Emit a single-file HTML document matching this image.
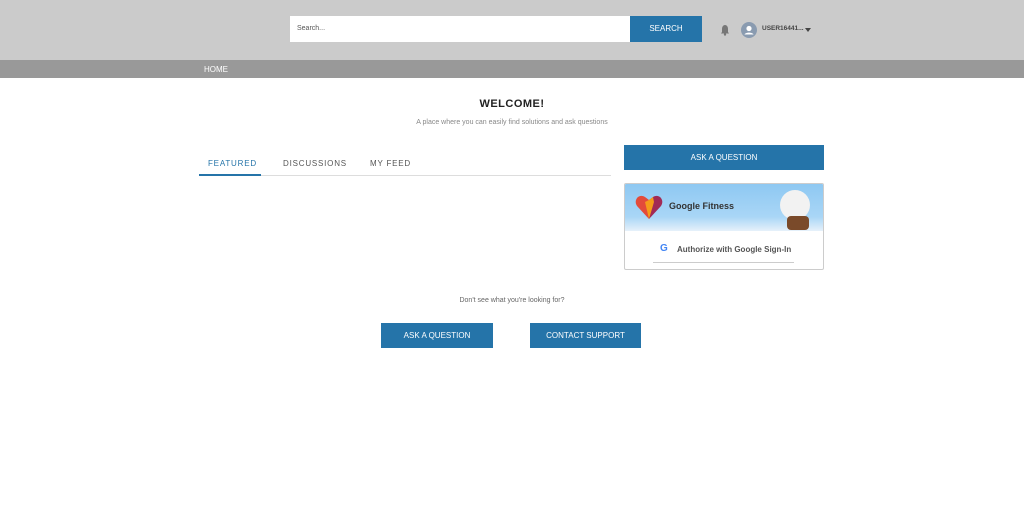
<!DOCTYPE html>
<html><head><style>
body{margin:0;width:1024px;height:520px;background:#fff;font-family:"Liberation Sans",sans-serif;position:relative;overflow:hidden}
.a{position:absolute;line-height:1}
.btn{background:#2574a9;color:#fff;font-size:8px;display:flex;align-items:center;justify-content:center}
</style></head><body>
<div class="a" style="left:0;top:0;width:1024px;height:60px;background:#cbcbcb"></div>
<div class="a" style="left:290px;top:16px;width:340px;height:26px;background:#fff;font-size:7px;color:#555;line-height:26px;text-indent:7px">Search...</div>
<div class="a btn" style="left:630px;top:16px;width:72px;height:26px">SEARCH</div>
<svg class="a" style="left:719px;top:24px" width="12" height="12" viewBox="0 0 12 12"><path d="M6 1C4 1 3 3 3 5v3L2 9.5h8L9 8V5C9 3 8 1 6 1z" fill="#777"/><circle cx="6" cy="10.5" r="1.2" fill="#777"/></svg>
<svg class="a" style="left:741px;top:22px" width="16" height="16" viewBox="0 0 16 16"><circle cx="8" cy="8" r="8" fill="#8a9bb0"/><circle cx="8" cy="6.5" r="2.6" fill="#fff"/><path d="M3.5 12.5c1-2.5 8-2.5 9 0z" fill="#fff"/></svg>
<div class="a" style="left:762px;top:26px;font-size:6.5px;font-weight:bold;color:#444">USER16441...</div>
<div class="a" style="left:805px;top:28px;width:0;height:0;border-left:3px solid transparent;border-right:3px solid transparent;border-top:4px solid #444"></div>
<div class="a" style="left:0;top:60px;width:1024px;height:18px;background:#999"></div>
<div class="a" style="left:204px;top:66px;font-size:8px;color:#fff">HOME</div>
<div class="a" style="left:0;top:99px;width:1024px;text-align:center;font-size:11px;font-weight:bold;color:#222;letter-spacing:.5px">WELCOME!</div>
<div class="a" style="left:0;top:119px;width:1024px;text-align:center;font-size:7px;color:#888">A place where you can easily find solutions and ask questions</div>
<div class="a" style="left:199px;top:175px;width:412px;height:1px;background:#ddd"></div>
<div class="a" style="left:199px;top:174px;width:62px;height:2px;background:#2574a9"></div>
<div class="a" style="left:208px;top:160px;font-size:8px;color:#2574a9;letter-spacing:.8px">FEATURED</div>
<div class="a" style="left:283px;top:160px;font-size:8px;color:#555;letter-spacing:.8px">DISCUSSIONS</div>
<div class="a" style="left:370px;top:160px;font-size:8px;color:#555;letter-spacing:.8px">MY FEED</div>
<div class="a btn" style="left:624px;top:145px;width:200px;height:25px">ASK A QUESTION</div>
<div class="a" style="left:624px;top:183px;width:198px;height:85px;border:1px solid #ccc;border-radius:2px;overflow:hidden">
<div style="height:47px;background:linear-gradient(#8ec8f2,#a9d6f6 70%,#e6f1fa)"></div>
<svg class="a" style="left:10px;top:10px" width="28" height="25" viewBox="0 0 28 25"><path d="M14 25L2 12C-2 6 4 -1 10 3L14 6z" fill="#e34b3a"/><path d="M14 25L26 12C30 6 24 -1 18 3L14 6z" fill="#a12a55"/><path d="M14 25L10 8 14 6 18 3 19 8z" fill="#f59b1a"/></svg>
<div class="a" style="left:44px;top:18px;font-size:9px;font-weight:bold;color:#333">Google Fitness</div>
<div class="a" style="left:155px;top:6px;width:30px;height:30px;border-radius:50%;background:#f2f2f2"></div>
<div class="a" style="left:162px;top:32px;width:22px;height:14px;background:#7a4a2a;border-radius:4px"></div>
<div class="a" style="left:28px;top:58px;width:141px;height:20px;border-bottom:1px solid #ccc;font-size:8px;font-weight:bold;color:#555;line-height:16px;text-indent:24px">Authorize with Google Sign-In</div>
<div class="a" style="left:35px;top:60px;font-size:10px;font-weight:bold;color:#4285f4">G</div>
</div>
<div class="a" style="left:0;top:297px;width:1024px;text-align:center;font-size:7px;color:#666">Don't see what you're looking for?</div>
<div class="a btn" style="left:381px;top:323px;width:112px;height:25px">ASK A QUESTION</div>
<div class="a btn" style="left:530px;top:323px;width:111px;height:25px">CONTACT SUPPORT</div>
</body></html>
